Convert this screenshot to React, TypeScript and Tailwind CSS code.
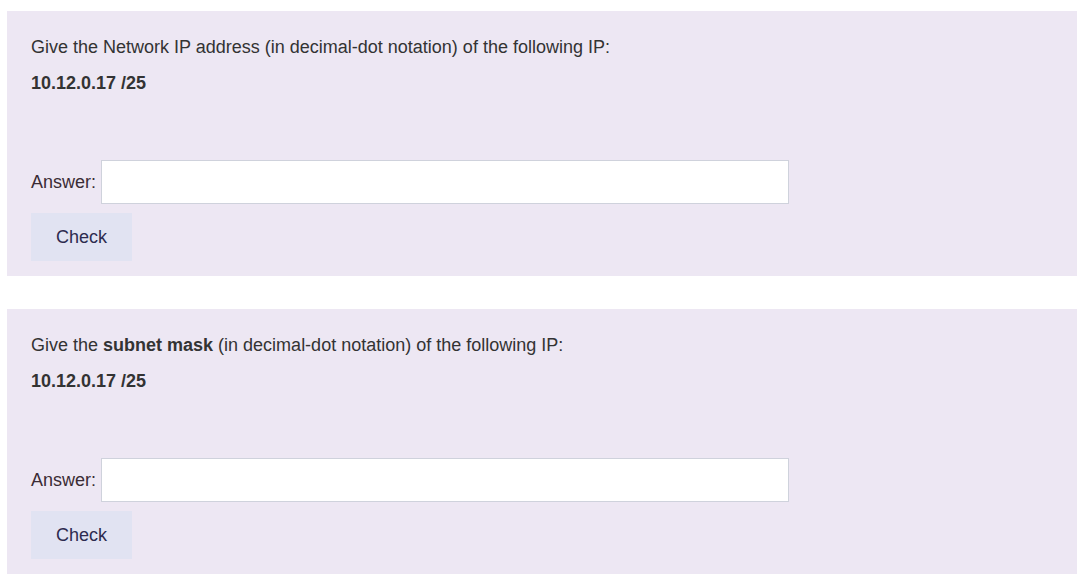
const questions = [
  {
    prompt: (
      <>Give the Network IP address (in decimal-dot notation) of the following IP:</>
    ),
    ip: '10.12.0.17 /25',
  },
  {
    prompt: (
      <>
        Give the <b className="font-bold">subnet mask</b> (in decimal-dot notation) of the following IP:
      </>
    ),
    ip: '10.12.0.17 /25',
  },
]

const App = () => {
  return (
    <div
      className="min-h-[577px] bg-white pt-[11px] pl-[7px] text-[18px] text-[#333333]"
      style={{ fontFamily: '"Liberation Sans", Arial, sans-serif' }}
    >
      <div className="flex flex-col gap-[33px]">
        {questions.map((q, i) => (
          <div key={i} className="bg-[#ede7f3] px-6 pt-6 pb-[15px]">
            <p className="leading-6">{q.prompt}</p>
            <p className="mt-3 leading-6 font-bold">{q.ip}</p>

            <div className="mt-[65px] flex items-center gap-[5px]">
              <label className="text-[#3b2c35]">Answer:</label>
              <input
                type="text"
                className="h-[44px] w-[688px] border border-[#cfd2dc] bg-white px-2 outline-none"
              />
            </div>

            <button className="mt-[9px] h-12 w-[101px] bg-[#e1e3f2] text-[#2d2b4f]">
              Check
            </button>
          </div>
        ))}
      </div>
    </div>
  )
}

export default App
